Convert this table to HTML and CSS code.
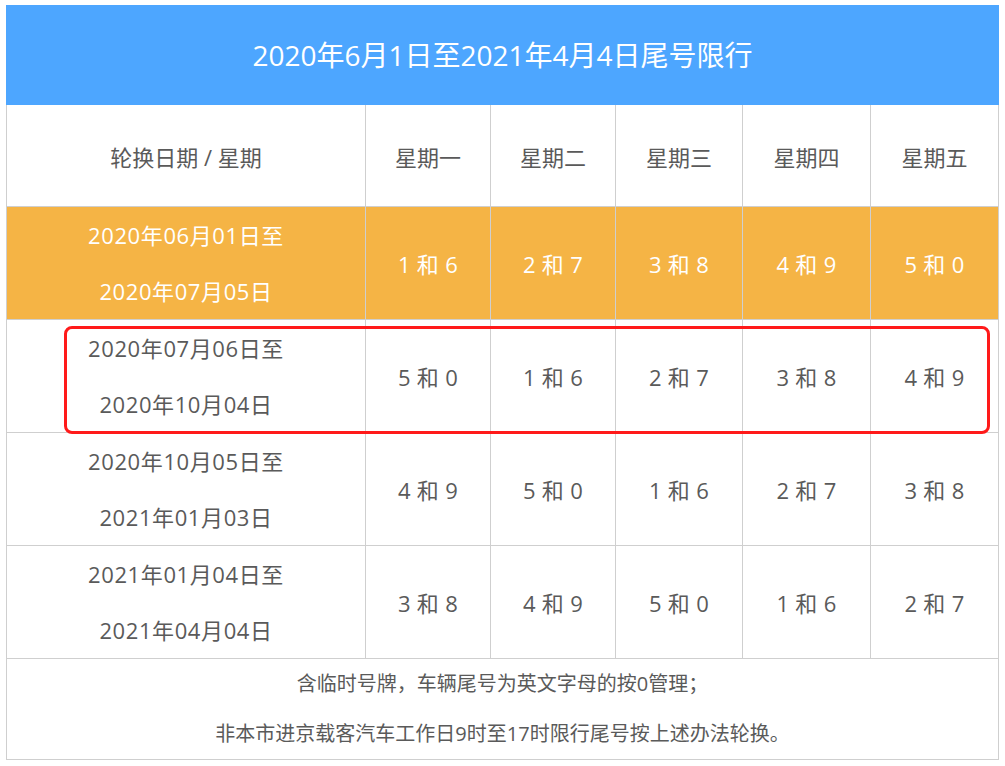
FILE: index.html
```html
<!DOCTYPE html>
<html lang="zh-CN">
<head>
<meta charset="utf-8">
<title>尾号限行</title>
<link rel="stylesheet" href="styles.css">
</head>
<body>
<div class="wrap">
  <div class="title">2020年6月1日至2021年4月4日尾号限行</div>
  <table class="grid">
    <colgroup>
      <col class="c-date">
      <col class="c-a">
      <col class="c-a">
      <col class="c-b">
      <col class="c-c">
      <col class="c-c">
    </colgroup>
    <thead>
      <tr class="head">
        <th>轮换日期 / 星期</th>
        <th>星期一</th>
        <th>星期二</th>
        <th>星期三</th>
        <th>星期四</th>
        <th>星期五</th>
      </tr>
    </thead>
    <tbody>
      <tr class="row current">
        <td class="date">2020年06月01日至<br>2020年07月05日</td>
        <td>1 和 6</td><td>2 和 7</td><td>3 和 8</td><td>4 和 9</td><td>5 和 0</td>
      </tr>
      <tr class="row">
        <td class="date">2020年07月06日至<br>2020年10月04日</td>
        <td>5 和 0</td><td>1 和 6</td><td>2 和 7</td><td>3 和 8</td><td>4 和 9</td>
      </tr>
      <tr class="row">
        <td class="date">2020年10月05日至<br>2021年01月03日</td>
        <td>4 和 9</td><td>5 和 0</td><td>1 和 6</td><td>2 和 7</td><td>3 和 8</td>
      </tr>
      <tr class="row">
        <td class="date">2021年01月04日至<br>2021年04月04日</td>
        <td>3 和 8</td><td>4 和 9</td><td>5 和 0</td><td>1 和 6</td><td>2 和 7</td>
      </tr>
      <tr class="foot">
        <td colspan="6">含临时号牌，车辆尾号为英文字母的按0管理；<br>非本市进京载客汽车工作日9时至17时限行尾号按上述办法轮换。</td>
      </tr>
    </tbody>
  </table>
  <div class="highlight"></div>
</div>
</body>
</html>
```

FILE: styles.css
```css
html, body {
  margin: 0;
  padding: 0;
  background: #ffffff;
}

body {
  padding: 5px 6px;
  font-family: "Open Sans", "Noto Sans CJK SC", sans-serif;
  color: #5a5a5a;
}

.wrap {
  position: relative;
  width: 993px;
}

.title {
  height: 100px;
  background: #4da6ff;
  color: #ffffff;
  font-size: 28px;
  line-height: 100px;
  text-align: center;
}

.grid {
  width: 993px;
  border-collapse: collapse;
  table-layout: fixed;
}

.c-date { width: 359px; }
.c-a { width: 125px; }
.c-b { width: 127px; }
.c-c { width: 128px; }

.grid th,
.grid td {
  border: 1px solid #cfcfcf;
  padding: 0;
  text-align: center;
  vertical-align: middle;
  font-size: 22px;
  font-weight: normal;
}

.head th {
  height: 101px;
  border-top: none;
}

.row td {
  height: 112px;
  letter-spacing: 0.3px;
}

.row td.date {
  line-height: 56px;
  letter-spacing: 0.6px;
}

.current td {
  background: #f5b445;
  color: #ffffff;
}

.foot td {
  height: 100px;
  font-size: 20px;
  line-height: 50px;
}

.highlight {
  position: absolute;
  left: 58px;
  top: 321px;
  width: 920px;
  height: 102px;
  border: 3px solid #ff1a1a;
  border-radius: 8px;
}
```
